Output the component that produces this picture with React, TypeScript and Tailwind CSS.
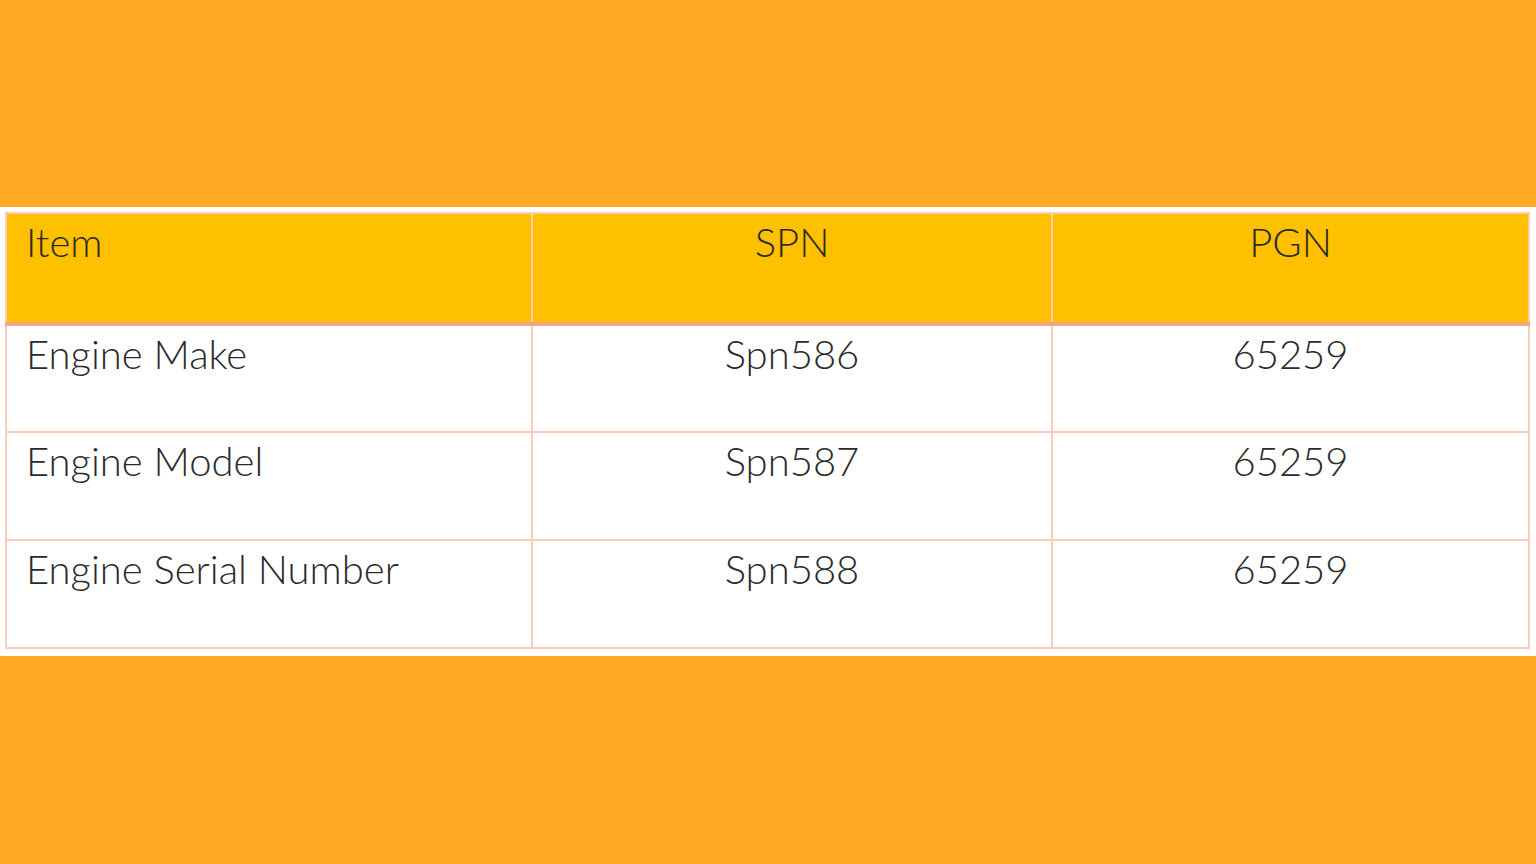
import React from 'react';

interface Row {
  item: string;
  spn: string;
  pgn: string;
}

const rows: Row[] = [
  { item: 'Engine Make', spn: 'Spn586', pgn: '65259' },
  { item: 'Engine Model', spn: 'Spn587', pgn: '65259' },
  { item: 'Engine Serial Number', spn: 'Spn588', pgn: '65259' },
];

const App: React.FC = () => {
  return (
    <div
      className="min-h-screen bg-[#FFA925] flex flex-col"
      style={{ fontFamily: 'Lato, "Noto Sans", sans-serif' }}
    >
      <div className="h-[207px]" />

      <div className="bg-white pl-[5px] pr-[6px] pt-[5px] pb-[7px]">
        <table className="w-full border-collapse border-2 border-[#F8CDB9] text-[#2b2b2b] text-[40px] leading-[1.2] font-light">
          <colgroup>
            <col className="w-[526px]" />
            <col className="w-[520px]" />
            <col />
          </colgroup>
          <thead>
            <tr className="bg-[#FFC000] h-[111px] border-b-[4px] border-[#F2A688]">
              <th className="align-top text-left font-light px-[19px] pt-[4px] border-r-2 border-[#F8CDB9]">
                Item
              </th>
              <th className="align-top text-center font-light pt-[4px] border-r-2 border-[#F8CDB9]">
                SPN
              </th>
              <th className="align-top text-center font-light pt-[4px]">PGN</th>
            </tr>
          </thead>
          <tbody>
            {rows.map((row) => (
              <tr key={row.item} className="h-[108px] border-t-2 border-[#F8CDB9]">
                <td className="align-top px-[19px] pt-[4px] border-r-2 border-[#F8CDB9]">
                  {row.item}
                </td>
                <td className="align-top text-center pt-[4px] border-r-2 border-[#F8CDB9]">
                  {row.spn}
                </td>
                <td className="align-top text-center pt-[4px]">{row.pgn}</td>
              </tr>
            ))}
          </tbody>
        </table>
      </div>

      <div className="flex-1" />
    </div>
  );
};

export default App;
